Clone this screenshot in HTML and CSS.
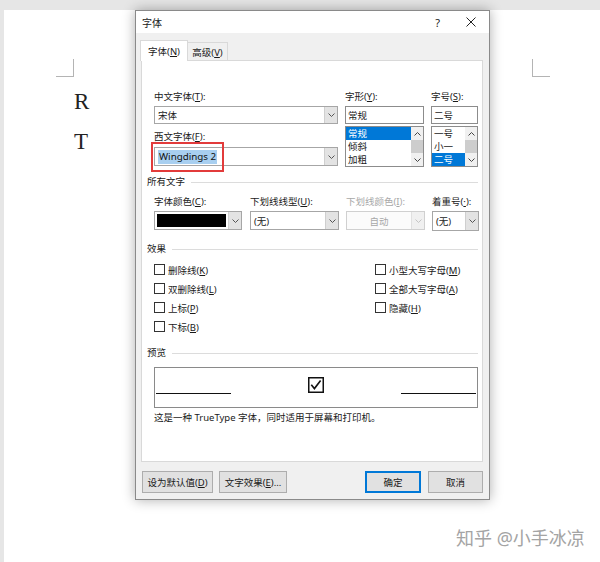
FILE: index.html
```html
<!DOCTYPE html>
<html lang="zh-CN">
<head>
<meta charset="utf-8">
<title>字体</title>
<link rel="stylesheet" href="styles.css">
</head>
<body>
<div class="doc">
  <div class="marks"><span class="mark mark-l"></span><span class="mark mark-r"></span></div>
  <div class="doc-text"><p>R</p><p>T</p></div>
</div>

<div class="dialog">
  <div class="titlebar">
    <span class="title">字体</span>
    <span class="tb-btns">
      <span class="help">?</span>
      <svg class="close" width="10" height="10" viewBox="0 0 10 10"><path d="M0.5 0.5 L9.5 9.5 M9.5 0.5 L0.5 9.5" stroke="#222" stroke-width="1" fill="none"/></svg>
    </span>
  </div>
  <div class="dlg-body">
    <div class="tabs">
      <div class="tab active"><span>字体(<u>N</u>)</span></div>
      <div class="tab"><span>高级(<u>V</u>)</span></div>
    </div>
    <div class="panel">
      <div class="fontgrid">
        <div class="col">
          <div class="lbl">中文字体(<u>T</u>):</div>
          <div class="combo c1"><span class="ctext">宋体</span><span class="arrow"><svg width="7" height="4" viewBox="0 0 7 4"><path d="M0.5 0.5 L3.5 3.5 L6.5 0.5" stroke="#555" fill="none"/></svg></span></div>
          <div class="lbl lbl2">西文字体(<u>F</u>):</div>
          <div class="combo c2"><span class="ctext"><span class="sel">Wingdings 2</span></span><span class="arrow"><svg width="7" height="4" viewBox="0 0 7 4"><path d="M0.5 0.5 L3.5 3.5 L6.5 0.5" stroke="#555" fill="none"/></svg></span><span class="redbox"></span></div>
        </div>
        <div class="col">
          <div class="lbl">字形(<u>Y</u>):</div>
          <div class="tbox">常规</div>
          <div class="listbox">
            <div class="items"><div class="item selected">常规</div><div class="item">倾斜</div><div class="item">加粗</div></div>
            <div class="sbar">
              <span class="sbtn"><svg width="7" height="4" viewBox="0 0 7 4"><path d="M0.5 3.5 L3.5 0.5 L6.5 3.5" stroke="#444" fill="none"/></svg></span>
              <span class="thumb"></span>
              <span class="sbtn"><svg width="7" height="4" viewBox="0 0 7 4"><path d="M0.5 0.5 L3.5 3.5 L6.5 0.5" stroke="#444" fill="none"/></svg></span>
            </div>
          </div>
        </div>
        <div class="col">
          <div class="lbl">字号(<u>S</u>):</div>
          <div class="tbox">二号</div>
          <div class="listbox">
            <div class="items"><div class="item">一号</div><div class="item">小一</div><div class="item selected">二号</div></div>
            <div class="sbar">
              <span class="sbtn"><svg width="7" height="4" viewBox="0 0 7 4"><path d="M0.5 3.5 L3.5 0.5 L6.5 3.5" stroke="#444" fill="none"/></svg></span>
              <span class="thumb"></span>
              <span class="sbtn"><svg width="7" height="4" viewBox="0 0 7 4"><path d="M0.5 0.5 L3.5 3.5 L6.5 0.5" stroke="#444" fill="none"/></svg></span>
            </div>
          </div>
        </div>
      </div>

      <div class="group g-all"><span>所有文字</span><i></i></div>
      <div class="attrgrid">
        <div class="col">
          <div class="lbl">字体颜色(<u>C</u>):</div>
          <div class="combo c3"><span class="swatch"></span><span class="arrow"><svg width="7" height="4" viewBox="0 0 7 4"><path d="M0.5 0.5 L3.5 3.5 L6.5 0.5" stroke="#555" fill="none"/></svg></span></div>
        </div>
        <div class="col">
          <div class="lbl">下划线线型(<u>U</u>):</div>
          <div class="combo c3"><span class="ctext">(无)</span><span class="arrow"><svg width="7" height="4" viewBox="0 0 7 4"><path d="M0.5 0.5 L3.5 3.5 L6.5 0.5" stroke="#555" fill="none"/></svg></span></div>
        </div>
        <div class="col">
          <div class="lbl dis">下划线颜色(<u>I</u>):</div>
          <div class="combo c3 disabled"><span class="ctext center">自动</span><span class="arrow"><svg width="7" height="4" viewBox="0 0 7 4"><path d="M0.5 0.5 L3.5 3.5 L6.5 0.5" stroke="#c4c4c4" fill="none"/></svg></span></div>
        </div>
        <div class="col">
          <div class="lbl">着重号(<u>·</u>):</div>
          <div class="combo c4"><span class="ctext">(无)</span><span class="arrow"><svg width="7" height="4" viewBox="0 0 7 4"><path d="M0.5 0.5 L3.5 3.5 L6.5 0.5" stroke="#555" fill="none"/></svg></span></div>
        </div>
      </div>

      <div class="group g-fx"><span>效果</span><i></i></div>
      <div class="checks">
        <div class="ccol">
          <div class="chk"><span class="box"></span><span>删除线(<u>K</u>)</span></div>
          <div class="chk"><span class="box"></span><span>双删除线(<u>L</u>)</span></div>
          <div class="chk"><span class="box"></span><span>上标(<u>P</u>)</span></div>
          <div class="chk"><span class="box"></span><span>下标(<u>B</u>)</span></div>
        </div>
        <div class="ccol">
          <div class="chk"><span class="box"></span><span>小型大写字母(<u>M</u>)</span></div>
          <div class="chk"><span class="box"></span><span>全部大写字母(<u>A</u>)</span></div>
          <div class="chk"><span class="box"></span><span>隐藏(<u>H</u>)</span></div>
        </div>
      </div>

      <div class="group g-pv"><span>预览</span><i></i></div>
      <div class="preview">
        <span class="pline"></span>
        <svg class="pcheck" width="16" height="16" viewBox="0 0 16 16"><rect x="0.75" y="0.75" width="14.5" height="14.5" fill="none" stroke="#111" stroke-width="1.5"/><path d="M3.3 7.8 L6.4 11.6 L12.6 3.4" fill="none" stroke="#111" stroke-width="1.6"/></svg>
        <span class="pline right"></span>
      </div>
      <div class="desc">这是一种 TrueType 字体，同时适用于屏幕和打印机。</div>
    </div>

    <div class="buttons">
      <button class="btn b1"><span>设为默认值(<u>D</u>)</span></button>
      <button class="btn b2"><span>文字效果(<u>E</u>)...</span></button>
      <span class="spacer"></span>
      <button class="btn b3 default">确定</button>
      <button class="btn b4">取消</button>
    </div>
  </div>
</div>

<div class="watermark">知乎 @小手冰凉</div>
</body>
</html>
```

FILE: styles.css
```css
html, body {
  margin: 0;
  padding: 0;
}
body {
  width: 600px;
  height: 562px;
  overflow: hidden;
  position: relative;
  background: #e6e6e6;
  font-family: "Noto Sans", "Noto Sans CJK SC", sans-serif;
  color: #1a1a1a;
}
u { text-decoration: underline; text-underline-offset: 1px; }

/* document page */
.doc {
  margin: 10px 0 0 4px;
  height: 552px;
  background: #fff;
  box-sizing: border-box;
  padding: 49px 50px 0 52px;
}
.marks {
  display: flex;
  justify-content: space-between;
}
.mark {
  width: 18px;
  height: 18px;
  box-sizing: border-box;
  border-bottom: 1px solid #b4b4b4;
}
.mark-l { border-right: 1px solid #b4b4b4; }
.mark-r { border-left: 1px solid #b4b4b4; }
.doc-text {
  margin: 5px 0 0 18px;
  font-family: "Liberation Serif", serif;
  font-size: 23px;
  line-height: 40px;
  color: #222;
}
.doc-text p { margin: 0; }

/* dialog window */
.dialog {
  position: absolute;
  left: 135px;
  top: 10px;
  width: 355px;
  height: 490px;
  box-sizing: border-box;
  border: 1px solid #8a8a8a;
  background: #f0f0f0;
  box-shadow: 0 0 12px rgba(0, 0, 0, 0.32);
  font-size: 9.5px;
  display: flex;
  flex-direction: column;
}
.titlebar {
  height: 22px;
  background: #fff;
  display: flex;
  align-items: center;
  justify-content: space-between;
  padding: 0 13px 0 6px;
  font-size: 10px;
}
.tb-btns {
  display: flex;
  align-items: center;
  gap: 26px;
}
.help {
  font-size: 11px;
  color: #222;
}
.close { display: block; }

.dlg-body {
  flex: 1;
  display: flex;
  flex-direction: column;
}
.tabs {
  margin-top: 7px;
  height: 20px;
  padding-left: 4px;
  display: flex;
  align-items: flex-end;
}
.tab {
  box-sizing: border-box;
  border: 1px solid #d9d9d9;
  border-bottom: none;
  display: flex;
  align-items: center;
  justify-content: center;
}
.tab.active {
  width: 48px;
  height: 21px;
  margin-bottom: -1px;
  background: #fff;
  position: relative;
  z-index: 1;
}
.tab:not(.active) {
  width: 40px;
  height: 18px;
  border-left: none;
  background: #f0f0f0;
}

.panel {
  margin: 0 6px 0 5px;
  height: 402px;
  box-sizing: border-box;
  border: 1px solid #d9d9d9;
  background: #fff;
  padding: 28px 4px 0 5px;
}

.lbl {
  height: 16px;
  line-height: 16px;
  white-space: nowrap;
}
.lbl.dis { color: #a8a8a8; }

.fontgrid {
  margin-left: 7px;
  display: grid;
  grid-template-columns: 184px 79px 47px;
  column-gap: 7px;
}
.col {
  display: flex;
  flex-direction: column;
}
.combo {
  margin-top: 1px;
  box-sizing: border-box;
  border: 1px solid #a6a6a6;
  background: #fff;
  display: flex;
  position: relative;
}
.combo.c1 { height: 18px; }
.lbl2 { margin-top: 5px; }
.combo.c2 { height: 19px; margin-top: 2px; }
.ctext {
  flex: 1;
  padding-left: 3px;
  display: flex;
  align-items: center;
  white-space: nowrap;
}
.ctext.center { justify-content: center; padding-left: 0; }
.sel {
  background: #a8cff0;
  color: #111;
  font-size: 9.8px;
  line-height: 14px;
  padding: 0 1px;
}
.arrow {
  width: 12px;
  background: #e3e3e3;
  border-left: 1px solid #cfcfcf;
  display: flex;
  align-items: center;
  justify-content: center;
}
.arrow svg { display: block; }
.redbox {
  position: absolute;
  left: -4px;
  top: -6px;
  width: 73px;
  height: 30px;
  box-sizing: border-box;
  border: 2px solid #e23b3b;
}

.tbox {
  margin-top: 1px;
  height: 18px;
  box-sizing: border-box;
  border: 1px solid #8c8c8c;
  background: #fff;
  padding-left: 2px;
  display: flex;
  align-items: center;
}
.listbox {
  margin-top: 2px;
  height: 41px;
  box-sizing: border-box;
  border: 1px solid #8c8c8c;
  background: #fff;
  display: flex;
}
.items { flex: 1; }
.item {
  height: 13px;
  line-height: 13px;
  padding-left: 2px;
}
.item.selected {
  background: #0078d7;
  color: #fff;
}
.sbar {
  width: 12px;
  background: #f0f0f0;
  display: flex;
  flex-direction: column;
}
.sbtn {
  height: 13px;
  display: flex;
  align-items: center;
  justify-content: center;
}
.thumb {
  flex: 1;
  background: #cdcdcd;
}

/* group headings */
.group {
  display: flex;
  align-items: center;
  height: 16px;
  line-height: 16px;
  gap: 6px;
}
.group i {
  flex: 1;
  height: 1px;
  background: #dcdcdc;
}
.g-all { margin-top: 7px; }
.g-fx { margin-top: 10px; }
.g-pv { margin-top: 9px; }

.attrgrid {
  margin-left: 7px;
  margin-top: 4px;
  display: grid;
  grid-template-columns: 89px 89px 79px 47px;
  column-gap: 7px;
}
.attrgrid .col:first-child { margin-right: 1px; }
.combo.c3 { height: 19px; }
.combo.c4 { height: 20px; }
.combo.disabled {
  border-color: #d0d0d0;
  background: #fbfbfb;
  color: #a8a8a8;
}
.combo.disabled .arrow {
  background: #f0f0f0;
  border-left-color: #e0e0e0;
}
.swatch {
  flex: 1;
  margin: 2px;
  background: #000;
}

.checks {
  margin: 3px 0 0 7px;
  display: grid;
  grid-template-columns: 221px 1fr;
}
.chk {
  height: 19px;
  display: flex;
  align-items: center;
  gap: 3px;
  white-space: nowrap;
}
.box {
  width: 11px;
  height: 11px;
  box-sizing: border-box;
  border: 1px solid #333;
  background: #fff;
}

.preview {
  margin: 6px 0 0 7px;
  height: 41px;
  box-sizing: border-box;
  border: 1px solid #8a8a8a;
  display: grid;
  grid-template-columns: 1fr auto 1fr;
  align-items: start;
  padding: 0 1px;
}
.pline {
  width: 75px;
  height: 1px;
  background: #111;
  margin-top: 25px;
}
.pline.right { justify-self: end; }
.pcheck {
  display: block;
  margin-top: 9px;
}
.desc {
  margin: 2px 0 0 7px;
  height: 16px;
  line-height: 16px;
  white-space: nowrap;
}

.buttons {
  margin-top: 9px;
  padding: 0 6px;
  display: flex;
  gap: 6px;
}
.spacer { flex: 1; }
.btn {
  height: 22px;
  box-sizing: border-box;
  border: 1px solid #adadad;
  background: #e1e1e1;
  font: inherit;
  color: #1a1a1a;
  padding: 0;
  display: flex;
  align-items: center;
  justify-content: center;
}
.b1 { width: 71px; }
.b2 { width: 68px; }
.b3 { width: 56px; margin-right: 1px; }
.b4 { width: 55px; }
.btn.default {
  border: 2px solid #0078d7;
}

.watermark {
  position: absolute;
  left: 456px;
  top: 527px;
  font-size: 18px;
  line-height: 22px;
  color: #a4a4a4;
  white-space: nowrap;
}
```
